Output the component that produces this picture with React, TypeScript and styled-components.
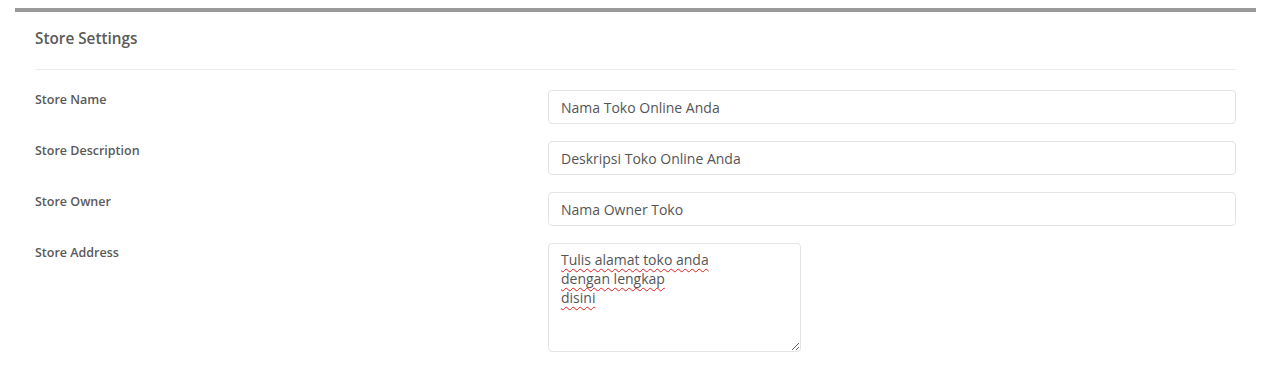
import styled, { createGlobalStyle } from "styled-components";

const GlobalStyle = createGlobalStyle`
  html, body {
    margin: 0;
    padding: 0;
    background: #fff;
  }
  body {
    font-family: "Open Sans", "Liberation Sans", sans-serif;
    color: #555;
  }
`;

const Page = styled.div`
  padding: 8px 24px 0 15px;
`;

const Card = styled.section`
  border-top: 4px solid #9a9a9a;
  padding: 0 20px 20px;
  background: #fff;
`;

const Header = styled.div`
  padding: 16px 0 21px;
  border-bottom: 1px solid #ececec;
  margin-bottom: 20px;
`;

const Title = styled.h3`
  margin: 0;
  font-size: 15.3px;
  line-height: 20px;
  font-weight: 600;
  color: #5a5a5a;
`;

const Form = styled.form`
  display: flex;
  flex-direction: column;
  gap: 17px;
`;

const Row = styled.div`
  display: grid;
  grid-template-columns: 513px 1fr;
  align-items: start;
`;

const Label = styled.label`
  font-size: 12.5px;
  font-weight: 600;
  line-height: 18px;
  color: #5a5a5a;
  padding-top: 1px;
`;

const Input = styled.input`
  box-sizing: border-box;
  width: 100%;
  height: 34px;
  padding: 0 12px;
  border: 1px solid #e3e3e3;
  border-radius: 4px;
  font-family: "Open Sans", "Liberation Sans", sans-serif;
  font-size: 14px;
  color: #555;
  background: #fff;
  outline: none;
`;

const TextArea = styled.textarea`
  box-sizing: border-box;
  width: 253px;
  height: 109px;
  padding: 6px 12px;
  border: 1px solid #e3e3e3;
  border-radius: 4px;
  font-family: "Open Sans", "Liberation Sans", sans-serif;
  font-size: 14px;
  color: #555;
  background: #fff;
  outline: none;
  resize: both;
  text-decoration: underline wavy #e02020;
  text-decoration-thickness: 1px;
  text-underline-offset: 3px;
  text-decoration-skip-ink: none;
`;

const fields = [
  { label: "Store Name", value: "Nama Toko Online Anda" },
  { label: "Store Description", value: "Deskripsi Toko Online Anda" },
  { label: "Store Owner", value: "Nama Owner Toko" },
];

export default function App() {
  return (
    <>
      <GlobalStyle />
      <Page>
        <Card>
          <Header>
            <Title>Store Settings</Title>
          </Header>
          <Form>
            {fields.map((f) => (
              <Row key={f.label}>
                <Label>{f.label}</Label>
                <Input type="text" defaultValue={f.value} />
              </Row>
            ))}
            <Row>
              <Label>Store Address</Label>
              <div>
                <TextArea
                  defaultValue={"Tulis alamat toko anda\ndengan lengkap\ndisini"}
                />
              </div>
            </Row>
          </Form>
        </Card>
      </Page>
    </>
  );
}
